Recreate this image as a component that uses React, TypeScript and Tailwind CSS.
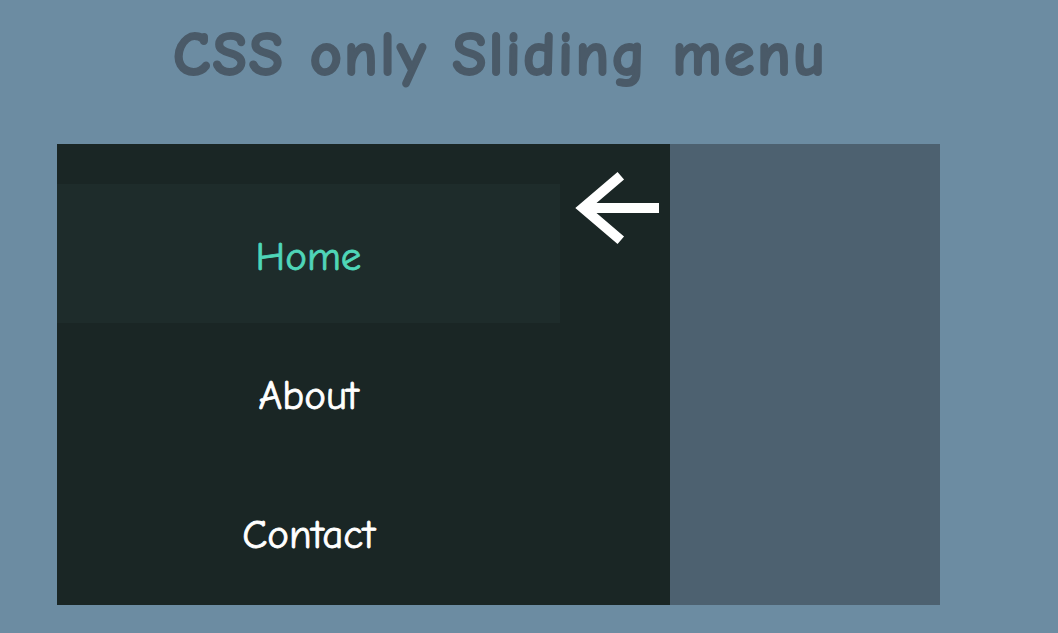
const items = [
  { label: "Home", active: true },
  { label: "About", active: false },
  { label: "Contact", active: false },
];

export default function App() {
  return (
    <div
      className="flex h-[633px] w-[1058px] flex-col bg-[#6c8ca2]"
      style={{ fontFamily: '"Comic Sans MS", "Comic Neue", Lato, "Open Sans", sans-serif' }}
    >
      <h1 className="pl-[173px] pt-[17px] text-[62px] font-bold leading-[76px] tracking-[2.4px] text-[#4a5a68] [-webkit-text-stroke:2px_#4a5a68]">
        CSS only Sliding menu
      </h1>

      <div className="ml-[57px] mt-[51px] flex h-[461px] w-[883px]">
        <nav className="relative flex w-[613px] flex-col bg-[#1a2625] pt-[40px]">
          <ul className="flex w-[503px] flex-col">
            {items.map((item) => (
              <li
                key={item.label}
                className={`flex h-[139px] items-center justify-center pt-[6px] text-[41px] ${
                  item.active
                    ? "bg-[#1e2c2b] text-[#4fd6b8] [-webkit-text-stroke:0.8px_#4fd6b8]"
                    : "text-white [-webkit-text-stroke:0.8px_#ffffff]"
                }`}
              >
                {item.label}
              </li>
            ))}
          </ul>
          <button className="absolute left-[512px] top-[26px] text-white">
            <svg width="92" height="76" viewBox="0 0 92 76" fill="none" stroke="currentColor" strokeWidth="10">
              <path d="M90 38H14" />
              <path d="M48 9L14 38l34 29" strokeLinecap="square" />
            </svg>
          </button>
        </nav>
        <div className="flex-1 bg-[#4d6170]" />
      </div>
    </div>
  );
}
